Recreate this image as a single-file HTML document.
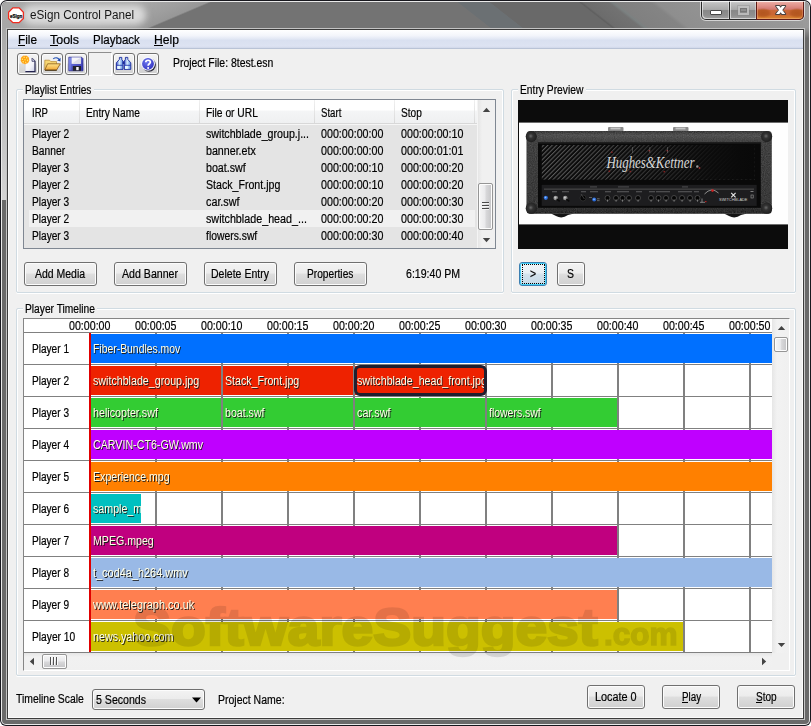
<!DOCTYPE html>
<html><head><meta charset="utf-8"><title>eSign Control Panel</title>
<style>
*{box-sizing:border-box;margin:0;padding:0}
html,body{width:811px;height:726px;overflow:hidden;background:#fff;font-family:"Liberation Sans",sans-serif;font-size:12px;color:#000}
.a{position:absolute}
.t{position:absolute;white-space:nowrap;transform-origin:0 0;-webkit-text-stroke:0.2px currentColor}
.gb{position:absolute;border:1px solid #d0dbe2;border-radius:2px;box-shadow:inset 1px 1px 0 #fff,inset -1px 0 0 #fff,0 1px 0 #fff}
.gbl{position:absolute;background:#f0f0f0;height:13px}
.btn{position:absolute;border:1px solid #707070;border-radius:3px;background:linear-gradient(#f3f3f3 0,#ececec 46%,#dedede 50%,#d0d0d0 100%);box-shadow:inset 0 0 0 1px #fcfcfc}
.bar{position:absolute;height:29px;overflow:hidden}
.bt{position:absolute;white-space:nowrap;transform-origin:0 0;color:#ffffe8;text-shadow:1px 1px 0 #1c1c1c}
.hl{position:absolute;height:1px;background:#808080}
.vl{position:absolute;width:2px;background:#808080}
.thumb{position:absolute;border:1px solid #959595;border-radius:2px;box-shadow:inset 0 0 0 1px #fdfdfd}
</style></head><body>

<div class="a" style="left:0;top:0;width:811px;height:726px;border-radius:7px 7px 6px 6px;background:#18181e"></div>
<div class="a" style="left:1px;top:1px;width:809px;height:724px;border-radius:6px 6px 5px 5px;background:#eaeaea"></div>
<div class="a" id="glass" style="left:2px;top:2px;width:807px;height:722px;border-radius:5px 5px 4px 4px;background:#6a6a6a;overflow:hidden"><div class="a" style="left:0;top:0;width:807px;height:27px;background:#737373"></div><div class="a" style="left:-2px;top:0;width:440px;height:27px;transform:skewX(-67deg);transform-origin:0 0;background:linear-gradient(90deg,#a8a8a8 0,#a6a6a6 150px,#9e9e9e 185px,#979797 208px,#737373 212px,#737373 440px)"></div><div class="a" style="left:398px;top:0;width:500px;height:27px;transform:skewX(52deg);transform-origin:0 0;background:linear-gradient(90deg,#737373 0,#737373 57px,#6b7073 58px,#6b7073 89px,#696969 90px,#696969 178px,#5f5f5f 180px,#6c6c6c 183px,#727272 208px,#7b8181 212px,#808080 216px,#848484 250px,#8e8e8e 256px,#939393 300px,#9b9b9b 400px)"></div><div class="a" style="left:0;top:27px;width:6px;height:171px;background:linear-gradient(#a8a8a8,#bcbcbc 40%,#d4d4d4)"></div><div class="a" style="left:801px;top:0;width:6px;height:36px;background:linear-gradient(#9c9c9c,#9a9a9a 70%,#6c6c6c)"></div></div>
<div class="a" style="left:6px;top:28px;width:799px;height:692px;background:#c4c4c4"></div>
<div class="a" style="left:7px;top:29px;width:797px;height:690px;background:#3c3c3c"></div>
<div class="a" style="left:8px;top:30px;width:795px;height:688px;background:#f0f0f0;border-left:1px solid #fafafa;border-right:1px solid #fcfcfc;border-bottom:1px solid #fbfbfb"></div>
<div class="a" style="left:22px;top:5px;width:124px;height:20px;border-radius:10px;background:#dadada;filter:blur(3.5px)"></div>
<div class="t" style="left:29.80px;top:8px;font-size:12.5px;line-height:14px;color:#161616;transform:scaleX(0.9359);-webkit-text-stroke:0;">eSign Control Panel</div>
<svg class="a" style="left:7px;top:6px" width="18" height="19" viewBox="0 0 18 19"><polygon points="5.9,1.9 12.1,1.9 16.4,6.2 16.4,12.4 12.1,16.7 5.9,16.7 1.6,12.4 1.6,6.2" fill="#fff" stroke="#ee2c20" stroke-width="1.3"/><text x="2.9" y="11.6" font-family="Liberation Sans" font-weight="bold" font-size="6.2" textLength="12.4" lengthAdjust="spacingAndGlyphs" fill="#000" stroke="#000" stroke-width=".25">eSign</text></svg>
<div class="a" style="left:700px;top:1px;width:105px;height:20px;border-radius:0 0 6px 6px;background:rgba(255,255,255,.6)"></div>
<div class="a" style="left:701px;top:1px;width:103px;height:19px;border-radius:0 0 5px 5px;background:#2a2a2a"></div>
<div class="a" style="left:702px;top:1px;width:27px;height:18px;border-radius:0 0 0 4px;background:linear-gradient(#d2d2d2 0,#bdbdbd 15%,#a9a9a9 47%,#878787 53%,#8f8f8f 80%,#a2a2a2 100%);box-shadow:inset 1px -1px 0 rgba(255,255,255,.55),inset -1px 0 0 rgba(255,255,255,.35)"></div>
<div class="a" style="left:730px;top:1px;width:26px;height:18px;background:linear-gradient(#d2d2d2 0,#bdbdbd 15%,#a9a9a9 47%,#878787 53%,#8f8f8f 80%,#a2a2a2 100%);box-shadow:inset 1px -1px 0 rgba(255,255,255,.55),inset -1px 0 0 rgba(255,255,255,.35)"></div>
<div class="a" style="left:756px;top:1px;width:48px;height:19px;border-radius:0 0 5px 0;background:#5e1a16"></div>
<div class="a" style="left:757px;top:1px;width:46px;height:18px;border-radius:0 0 4px 0;background:radial-gradient(ellipse 9px 5px at 6px 12px,rgba(176,84,28,.9) 0,rgba(176,84,28,.7) 60%,rgba(176,84,28,0) 100%),radial-gradient(ellipse 9px 5px at 40px 12px,rgba(176,84,28,.9) 0,rgba(176,84,28,.7) 60%,rgba(176,84,28,0) 100%),linear-gradient(#f6c8c0 0,#e9a49c 10%,#e09088 28%,#d37870 46%,#cb6838 52%,#ca6634 75%,#d47a2c 90%,#d88a3a 100%);box-shadow:inset 1px -1px 0 rgba(255,190,150,.4),inset -1px 0 0 rgba(255,190,150,.3)"></div>
<div class="a" style="left:701px;top:1px;width:103px;height:1px;background:rgba(255,255,255,.75)"></div>
<div class="a" style="left:710px;top:10px;width:12px;height:5px;background:#fff;border:1px solid #474747;border-radius:1px"></div>
<div class="a" style="left:738px;top:6px;width:11px;height:9px;border:2px solid #c2c2c2;background:#8a8a8a;box-shadow:0 0 0 1px rgba(130,130,130,.35);opacity:.85"></div>
<div class="a" style="left:740px;top:8px;width:7px;height:4px;border:1px solid #777;background:#8f8f8f"></div>
<svg class="a" style="left:770px;top:1px" width="22" height="18" viewBox="770 1 22 18"><path id="xg" d="M776 5.9 H779.3 L785.3 14.1 H782 Z M782 5.9 H785.3 L779.3 14.1 H776 Z" fill="#4a4240" stroke="#4a4240" stroke-width="1.8" stroke-linejoin="round"/><path d="M776 5.9 H779.3 L785.3 14.1 H782 Z M782 5.9 H785.3 L779.3 14.1 H776 Z" fill="#fff"/></svg>

<div class="a" style="left:8px;top:30px;width:795px;height:19px;background:linear-gradient(#ffffff 0,#f3f5fb 30%,#e4e9f5 45%,#d9e0f0 55%,#dde3f2 85%,#c9d1e3 100%)"></div>
<div class="a" style="left:8px;top:48px;width:795px;height:1px;background:#b9c3d6"></div>
<div class="t" style="left:18.00px;top:33px;font-size:12.5px;line-height:14px;color:#000;transform:scaleX(0.9441);">File</div><div class="a" style="left:18.0px;top:45px;width:7.2px;height:1px;background:#000"></div>
<div class="t" style="left:50.00px;top:33px;font-size:12.5px;line-height:14px;color:#000;transform:scaleX(0.9957);">Tools</div><div class="a" style="left:50.0px;top:45px;width:7.6px;height:1px;background:#000"></div>
<div class="t" style="left:93.00px;top:33px;font-size:12.5px;line-height:14px;color:#000;transform:scaleX(0.9238);">Playback</div>
<div class="t" style="left:154.00px;top:33px;font-size:12.5px;line-height:14px;color:#000;transform:scaleX(0.9709);">Help</div><div class="a" style="left:154.0px;top:45px;width:8.8px;height:1px;background:#000"></div>
<div class="btn" style="left:17px;top:53px;width:22px;height:22px"></div>
<div class="btn" style="left:41px;top:53px;width:22px;height:22px"></div>
<div class="btn" style="left:65px;top:53px;width:22px;height:22px"></div>
<div class="btn" style="left:113px;top:53px;width:22px;height:22px"></div>
<div class="btn" style="left:137px;top:53px;width:22px;height:22px"></div>
<div class="a" style="left:88px;top:52px;width:24px;height:24px;background:#f0f0f0;border-right:1px solid #fff;border-bottom:1px solid #fff;border-left:1px solid #8e8e8e;border-top:1px solid #8e8e8e"></div>
<div class="t" style="left:173.20px;top:56px;font-size:12px;line-height:14px;color:#000;transform:scaleX(0.8689);">Project File: 8test.esn</div>
<svg class="a" style="left:14px;top:50px" width="150" height="28" viewBox="14 50 150 28">
<defs>
<linearGradient id="pg" x1="0" y1="0" x2="1" y2="1"><stop offset="0" stop-color="#ffffff"/><stop offset="0.6" stop-color="#f4f4fa"/><stop offset="1" stop-color="#c9cde6"/></linearGradient>
<linearGradient id="fo" x1="0" y1="0" x2="0" y2="1"><stop offset="0" stop-color="#ffe48a"/><stop offset="1" stop-color="#f0a838"/></linearGradient>
<linearGradient id="fl" x1="0" y1="0" x2="1" y2="1"><stop offset="0" stop-color="#7a86e8"/><stop offset="1" stop-color="#3030a8"/></linearGradient>
<radialGradient id="hp" cx="0.4" cy="0.35" r="0.7"><stop offset="0" stop-color="#6c78f0"/><stop offset="1" stop-color="#3434c0"/></radialGradient>
<linearGradient id="bn" x1="0" y1="0" x2="1" y2="0"><stop offset="0" stop-color="#3a50c8"/><stop offset="0.45" stop-color="#d8f0ff"/><stop offset="1" stop-color="#5a8ae0"/></linearGradient>
</defs>
<!-- new -->
<path d="M25.2 58.3 H32 L35 61.3 V71.6 H25.2 Z" fill="url(#pg)"/>
<path d="M32 58.3 L35 61.3 V71.6 H25.2" fill="none" stroke="#23234e" stroke-width="1.2"/>
<path d="M32 58.3 V61.3 H35" fill="#d8d8e8" stroke="#3a3a66" stroke-width="0.8"/>
<path d="M25.2 58.3 V71.6" stroke="#c8c8d8" stroke-width="0.6"/>
<circle cx="25" cy="59.8" r="4.1" fill="#ff9a10"/>
<circle cx="25" cy="59.8" r="2.6" fill="none" stroke="#ffe868" stroke-width="1.3" stroke-dasharray="1.4 1.2"/>
<circle cx="25" cy="59.8" r="1" fill="#ffd23a"/>
<circle cx="25" cy="59.8" r="4.1" fill="none" stroke="#ffc040" stroke-width="0.8" stroke-dasharray="1.2 1.6"/>
<!-- open -->
<path d="M44.8 60.2 H49.5 L50.8 61.6 H56.5 V69.8 H44.8 Z" fill="#f7d774" stroke="#b8862a" stroke-width="0.7"/>
<path d="M47.6 63.8 H60.3 L56.6 70 H44.8 Z" fill="url(#fo)" stroke="#8a5a18" stroke-width="0.8"/>
<path d="M45 70.3 H56.8" stroke="#3a2a10" stroke-width="0.9"/>
<path d="M53.2 58.9 C55.5 57 58.3 57.6 59.4 59.8" fill="none" stroke="#2c58b8" stroke-width="1.2"/>
<path d="M60.6 57.8 L60.4 61.6 L57.2 60.4 Z" fill="#1c48b0"/>
<!-- save -->
<path d="M68.8 57.2 H81.6 L83 58.6 V70.8 H68.8 Z" fill="url(#fl)" stroke="#28288a" stroke-width="0.7"/>
<rect x="71.6" y="57.4" width="9.2" height="6.4" fill="#f4f4f8"/>
<path d="M71.6 63.8 L80.8 57.4 V63.8 Z" fill="#dcdce6"/>
<rect x="72.8" y="66" width="8.2" height="4.8" fill="#22222a"/>
<rect x="76.2" y="67" width="2.5" height="3.2" fill="#f4f4f4"/>
<rect x="69.3" y="57.8" width="1.2" height="12.4" fill="#8c98f0" opacity=".8"/>
<!-- binoculars -->
<g stroke="#1e2c9c" stroke-width="0.9">
<path d="M119.4 57.4 H121.8 V59.4 L123 61.2 V69.4 H116.4 V62.8 L119.4 59.4 Z" fill="url(#bn)"/>
<path d="M125.4 57.4 H127.8 V59.4 L130.8 62.8 V69.4 H124.2 V61.2 L125.4 59.4 Z" fill="url(#bn)"/>
</g>
<rect x="122.6" y="61.4" width="2" height="2.6" fill="#1e2c9c"/>
<path d="M116.6 65.3 H122.8 M124.4 65.3 H130.6" stroke="#2438b0" stroke-width="0.9"/>
<rect x="117.2" y="65.9" width="2.6" height="3" fill="#e8f8ff"/><rect x="125" y="65.9" width="2.6" height="3" fill="#e8f8ff"/>
<!-- help -->
<circle cx="149" cy="64.8" r="6.9" fill="#1a1a2a" opacity=".9"/>
<circle cx="148" cy="63.8" r="7" fill="#f4f6ff"/>
<circle cx="148" cy="63.8" r="5.9" fill="url(#hp)"/>
<path d="M145.8 62.2 C145.8 59.6 150.4 59.6 150.4 62.1 C150.4 63.8 148.1 63.8 148.1 65.8" fill="none" stroke="#fff" stroke-width="1.7"/>
<circle cx="148.1" cy="67.9" r="1" fill="#fff"/>
</svg>

<div class="gb" style="left:16px;top:89px;width:488px;height:204px"></div>
<div class="gbl" style="left:23.0px;top:83px;width:70.8px"></div>
<div class="t" style="left:25.40px;top:83px;font-size:12px;line-height:14px;color:#000;transform:scaleX(0.8435);">Playlist Entries</div>
<div class="gb" style="left:511px;top:89px;width:285px;height:204px"></div>
<div class="gbl" style="left:518.0px;top:83px;width:67.9px"></div>
<div class="t" style="left:520.40px;top:83px;font-size:12px;line-height:14px;color:#000;transform:scaleX(0.8563);">Entry Preview</div>
<div class="gb" style="left:16px;top:308px;width:780px;height:368px"></div>
<div class="gbl" style="left:22.8px;top:302px;width:74.4px"></div>
<div class="t" style="left:25.20px;top:302px;font-size:12px;line-height:14px;color:#000;transform:scaleX(0.8528);">Player Timeline</div>
<div class="a" style="left:23px;top:99px;width:473px;height:150px;background:#e4e4e4;border:1px solid #7f8792"></div>
<div class="a" style="left:24px;top:100px;width:471px;height:24px;background:linear-gradient(#ffffff 0,#ffffff 42%,#f4f5f6 50%,#eff0f1 100%);border-bottom:1px solid #d8d8d8"></div>
<div class="a" style="left:24px;top:124px;width:471px;height:1px;background:#f6f6f6"></div>
<div class="a" style="left:79px;top:100px;width:1px;height:23px;background:linear-gradient(#f0f0f0,#dadada)"></div>
<div class="a" style="left:199px;top:100px;width:1px;height:23px;background:linear-gradient(#f0f0f0,#dadada)"></div>
<div class="a" style="left:314px;top:100px;width:1px;height:23px;background:linear-gradient(#f0f0f0,#dadada)"></div>
<div class="a" style="left:394px;top:100px;width:1px;height:23px;background:linear-gradient(#f0f0f0,#dadada)"></div>
<div class="a" style="left:474px;top:100px;width:1px;height:23px;background:linear-gradient(#f0f0f0,#dadada)"></div>
<div class="t" style="left:31.60px;top:106px;font-size:12px;line-height:14px;color:#000;transform:scaleX(0.7984);">IRP</div>
<div class="t" style="left:86.20px;top:106px;font-size:12px;line-height:14px;color:#000;transform:scaleX(0.8491);">Entry Name</div>
<div class="t" style="left:205.90px;top:106px;font-size:12px;line-height:14px;color:#000;transform:scaleX(0.8547);">File or URL</div>
<div class="t" style="left:321.30px;top:106px;font-size:12px;line-height:14px;color:#000;transform:scaleX(0.8017);">Start</div>
<div class="t" style="left:401.20px;top:106px;font-size:12px;line-height:14px;color:#000;transform:scaleX(0.8414);">Stop</div>
<div class="a" style="left:29px;top:210px;width:446px;height:17px;background:#f1f1f1"></div>
<div class="a" style="left:477px;top:100px;width:1px;height:148px;background:#f4f4f4"></div>
<div class="a" style="left:478px;top:100px;width:17px;height:148px;background:linear-gradient(90deg,#e6e6e6,#f0f0f0 25%,#f0f0f0)"></div>
<div class="thumb" style="left:478px;top:183px;width:15px;height:47px;background:linear-gradient(90deg,#f6f6f6 0,#eaeaec 45%,#d8d8da 55%,#c4c4c6 100%)"></div>
<div class="a" style="left:482px;top:202px;width:7px;height:1px;background:#4a4a4a"></div><div class="a" style="left:482px;top:203px;width:7px;height:1px;background:#f4f4f4"></div>
<div class="a" style="left:482px;top:205px;width:7px;height:1px;background:#4a4a4a"></div><div class="a" style="left:482px;top:206px;width:7px;height:1px;background:#f4f4f4"></div>
<div class="a" style="left:482px;top:208px;width:7px;height:1px;background:#4a4a4a"></div><div class="a" style="left:482px;top:209px;width:7px;height:1px;background:#f4f4f4"></div>
<svg class="a" style="left:482px;top:107px" width="9" height="6"><path d="M0.8 5 L4.5 0.7 L8.2 5 Z" fill="#444"/></svg>
<svg class="a" style="left:482px;top:237px" width="9" height="6"><path d="M0.8 1 L4.5 5.3 L8.2 1 Z" fill="#444"/></svg>
<div class="t" style="left:31.60px;top:127px;font-size:12px;line-height:14px;color:#000;transform:scaleX(0.8447);">Player 2</div>
<div class="t" style="left:205.50px;top:127px;font-size:12px;line-height:14px;color:#000;transform:scaleX(0.8876);">switchblade_group.j...</div>
<div class="t" style="left:321.20px;top:127px;font-size:12px;line-height:14px;color:#000;transform:scaleX(0.8904);">000:00:00:00</div>
<div class="t" style="left:401.20px;top:127px;font-size:12px;line-height:14px;color:#000;transform:scaleX(0.8904);">000:00:00:10</div>
<div class="t" style="left:31.60px;top:144px;font-size:12px;line-height:14px;color:#000;transform:scaleX(0.8540);">Banner</div>
<div class="t" style="left:205.50px;top:144px;font-size:12px;line-height:14px;color:#000;transform:scaleX(0.8887);">banner.etx</div>
<div class="t" style="left:321.20px;top:144px;font-size:12px;line-height:14px;color:#000;transform:scaleX(0.8904);">000:00:00:00</div>
<div class="t" style="left:401.20px;top:144px;font-size:12px;line-height:14px;color:#000;transform:scaleX(0.8904);">000:00:01:01</div>
<div class="t" style="left:31.60px;top:161px;font-size:12px;line-height:14px;color:#000;transform:scaleX(0.8447);">Player 3</div>
<div class="t" style="left:205.50px;top:161px;font-size:12px;line-height:14px;color:#000;transform:scaleX(0.8892);">boat.swf</div>
<div class="t" style="left:321.20px;top:161px;font-size:12px;line-height:14px;color:#000;transform:scaleX(0.8904);">000:00:00:10</div>
<div class="t" style="left:401.20px;top:161px;font-size:12px;line-height:14px;color:#000;transform:scaleX(0.8904);">000:00:00:20</div>
<div class="t" style="left:31.60px;top:178px;font-size:12px;line-height:14px;color:#000;transform:scaleX(0.8447);">Player 2</div>
<div class="t" style="left:205.50px;top:178px;font-size:12px;line-height:14px;color:#000;transform:scaleX(0.8845);">Stack_Front.jpg</div>
<div class="t" style="left:321.20px;top:178px;font-size:12px;line-height:14px;color:#000;transform:scaleX(0.8904);">000:00:00:10</div>
<div class="t" style="left:401.20px;top:178px;font-size:12px;line-height:14px;color:#000;transform:scaleX(0.8904);">000:00:00:20</div>
<div class="t" style="left:31.60px;top:195px;font-size:12px;line-height:14px;color:#000;transform:scaleX(0.8447);">Player 3</div>
<div class="t" style="left:205.50px;top:195px;font-size:12px;line-height:14px;color:#000;transform:scaleX(0.8976);">car.swf</div>
<div class="t" style="left:321.20px;top:195px;font-size:12px;line-height:14px;color:#000;transform:scaleX(0.8904);">000:00:00:20</div>
<div class="t" style="left:401.20px;top:195px;font-size:12px;line-height:14px;color:#000;transform:scaleX(0.8904);">000:00:00:30</div>
<div class="t" style="left:31.60px;top:212px;font-size:12px;line-height:14px;color:#000;transform:scaleX(0.8447);">Player 2</div>
<div class="t" style="left:205.50px;top:212px;font-size:12px;line-height:14px;color:#000;transform:scaleX(0.8955);">switchblade_head_...</div>
<div class="t" style="left:321.20px;top:212px;font-size:12px;line-height:14px;color:#000;transform:scaleX(0.8904);">000:00:00:20</div>
<div class="t" style="left:401.20px;top:212px;font-size:12px;line-height:14px;color:#000;transform:scaleX(0.8904);">000:00:00:30</div>
<div class="t" style="left:31.60px;top:229px;font-size:12px;line-height:14px;color:#000;transform:scaleX(0.8447);">Player 3</div>
<div class="t" style="left:205.50px;top:229px;font-size:12px;line-height:14px;color:#000;transform:scaleX(0.8636);">flowers.swf</div>
<div class="t" style="left:321.20px;top:229px;font-size:12px;line-height:14px;color:#000;transform:scaleX(0.8904);">000:00:00:30</div>
<div class="t" style="left:401.20px;top:229px;font-size:12px;line-height:14px;color:#000;transform:scaleX(0.8904);">000:00:00:40</div>
<div class="btn" style="left:24px;top:262px;width:73px;height:24px"></div>
<div class="t" style="left:35.00px;top:267px;font-size:12px;line-height:14px;color:#000;transform:scaleX(0.8734);">Add Media</div>
<div class="btn" style="left:114px;top:262px;width:73px;height:24px"></div>
<div class="t" style="left:122.20px;top:267px;font-size:12px;line-height:14px;color:#000;transform:scaleX(0.8838);">Add Banner</div>
<div class="btn" style="left:204px;top:262px;width:73px;height:24px"></div>
<div class="t" style="left:211.00px;top:267px;font-size:12px;line-height:14px;color:#000;transform:scaleX(0.8788);">Delete Entry</div>
<div class="btn" style="left:294px;top:262px;width:73px;height:24px"></div>
<div class="t" style="left:307.20px;top:267px;font-size:12px;line-height:14px;color:#000;transform:scaleX(0.8480);">Properties</div>
<div class="t" style="left:406.00px;top:267px;font-size:12px;line-height:14px;color:#000;transform:scaleX(0.8806);">6:19:40 PM</div>
<svg class="a" style="left:518px;top:100px" width="270" height="149" viewBox="518 100 270 149">
<defs>
<pattern id="hatch" width="3.1" height="3.1" patternUnits="userSpaceOnUse" patternTransform="rotate(-45 542 145)"><rect width="3.1" height="3.1" fill="#0b0b0b"/><rect y="0" width="3.1" height="1.05" fill="#5e5e5e"/></pattern>
<linearGradient id="hfade" x1="0" x2="1"><stop offset="0" stop-color="#0b0b0b" stop-opacity="0"/><stop offset="0.3" stop-color="#0b0b0b" stop-opacity="0.25"/><stop offset="0.6" stop-color="#0b0b0b" stop-opacity="0.6"/><stop offset="0.8" stop-color="#0b0b0b" stop-opacity="0.9"/><stop offset="0.93" stop-color="#0a0a0a" stop-opacity="1"/><stop offset="1" stop-color="#090909" stop-opacity="1"/></linearGradient>
<linearGradient id="shell" x1="0" y1="0" x2="0" y2="1"><stop offset="0" stop-color="#2a2a2a"/><stop offset="0.05" stop-color="#464646"/><stop offset="0.13" stop-color="#343434"/><stop offset="0.9" stop-color="#2a2a2a"/><stop offset="1" stop-color="#161616"/></linearGradient>
<radialGradient id="ball" cx="0.45" cy="0.45" r="0.6"><stop offset="0" stop-color="#6a6a6a"/><stop offset="0.35" stop-color="#333"/><stop offset="1" stop-color="#1c1c1c"/></radialGradient>
<filter id="nz" x="0" y="0" width="1" height="1"><feTurbulence type="fractalNoise" baseFrequency="0.9" numOctaves="2" seed="3"/><feColorMatrix type="matrix" values="0 0 0 0 0.5  0 0 0 0 0.5  0 0 0 0 0.5  0.5 0.5 0 0 -0.28"/><feComposite in2="SourceGraphic" operator="in"/></filter>
</defs>
<rect x="518" y="100" width="270" height="149" fill="#0c0c0c"/>
<rect x="519" y="122.6" width="269" height="101.8" fill="#fefefe"/>
<rect x="608" y="127" width="15.5" height="4.5" rx="1" fill="#8a8a8a"/><rect x="610.5" y="127.6" width="10" height="1.8" fill="#c4c4c4"/>
<rect x="673" y="127" width="15.5" height="4.5" rx="1" fill="#8a8a8a"/><rect x="675.5" y="127.6" width="10" height="1.8" fill="#c4c4c4"/>
<path d="M551 213.5 H574 L568 215 Q562 219.4 556 216 Z" fill="#141414"/>
<path d="M724 213.5 H747 L741 215 Q735 219.4 729 216 Z" fill="#141414"/>
<rect x="526.5" y="131" width="245.3" height="82.8" rx="3.5" fill="url(#shell)"/>
<rect x="526.5" y="131" width="245.3" height="82.8" rx="3.5" fill="#888" filter="url(#nz)" opacity=".45"/>
<circle cx="531.3" cy="136.6" r="5.6" fill="url(#ball)"/>
<circle cx="766.6" cy="136.6" r="5.6" fill="url(#ball)"/>
<circle cx="531.3" cy="208.2" r="5.6" fill="url(#ball)"/>
<circle cx="766.6" cy="208.2" r="5.6" fill="url(#ball)"/>
<rect x="538" y="142.4" width="222.8" height="65.4" fill="#090909"/>
<rect x="538" y="142.4" width="222.8" height="1.2" fill="#1e1e1e"/>
<rect x="541.8" y="145" width="213" height="34.6" fill="url(#hatch)"/>
<rect x="541.8" y="145" width="213" height="34.6" fill="url(#hfade)"/>
<text x="606.5" y="168.3" font-family="Liberation Serif" font-style="italic" font-size="17" textLength="88" lengthAdjust="spacingAndGlyphs" fill="#d6d6d6">Hughes&amp;Kettner</text>
<rect x="608.5" y="170.5" width="1.6" height="1.4" fill="#a02020" opacity=".8"/>
<rect x="629.5" y="170.8" width="1.6" height="1.4" fill="#a02020" opacity=".8"/>
<rect x="663.5" y="171" width="1.6" height="1.4" fill="#a02020" opacity=".8"/>
<rect x="611" y="151.5" width="1.6" height="1.4" fill="#a02020" opacity=".8"/>
<rect x="648.5" y="150" width="1.6" height="1.4" fill="#a02020" opacity=".8"/>
<rect x="666.5" y="150" width="1.6" height="1.4" fill="#a02020" opacity=".8"/>
<rect x="632" y="147" width="0.7" height="6" fill="#888" opacity=".6"/>
<rect x="649.5" y="147" width="0.7" height="6" fill="#888" opacity=".6"/>
<rect x="667" y="147" width="0.7" height="6" fill="#888" opacity=".6"/>
<circle cx="697.3" cy="166.5" r="1.2" fill="#999"/><circle cx="699.5" cy="168" r="0.9" fill="#a03030"/>
<rect x="541.7" y="184.9" width="215" height="21" fill="#1d1d1f"/>
<rect x="544" y="188.7" width="210" height="0.8" fill="#5c5c5c"/>
<circle cx="545.8" cy="197.8" r="2.1" fill="#2a6ad8"/><circle cx="545.5" cy="197.4" r="0.9" fill="#8ec0ff"/>
<circle cx="555.7" cy="198" r="2.3" fill="#8a8a8a"/><circle cx="555.3000000000001" cy="197.6" r="1.1" fill="#c8c8c8"/><path d="M556.7 199 l3 2.4" stroke="#0a0a0a" stroke-width="1.6"/>
<circle cx="565.3" cy="198" r="2.3" fill="#8a8a8a"/><circle cx="564.9" cy="197.6" r="1.1" fill="#c8c8c8"/><path d="M566.3 199 l3 2.4" stroke="#0a0a0a" stroke-width="1.6"/>
<circle cx="583" cy="198" r="3" fill="#060606" stroke="#3a3a3a" stroke-width=".6"/><path d="M581 194 l3.4 5" stroke="#555" stroke-width=".7"/>
<circle cx="594.2" cy="199.6" r="2" fill="#2a6ad8"/><circle cx="594" cy="199.2" r="0.8" fill="#9ccaff"/>
<rect x="589" y="197.3" width="3" height="0.7" fill="#777"/><rect x="597" y="198.5" width="2.6" height="0.7" fill="#888"/><rect x="597" y="200.4" width="2.6" height="0.7" fill="#888"/>
<circle cx="607.5" cy="198" r="2.5" fill="#050505" stroke="#5a5a5a" stroke-width=".7"/><rect x="607.2" y="199.5" width="0.7" height="2.2" fill="#999"/>
<circle cx="616" cy="198" r="2.5" fill="#050505" stroke="#5a5a5a" stroke-width=".7"/><rect x="615.7" y="199.5" width="0.7" height="2.2" fill="#999"/>
<circle cx="622.5" cy="198" r="2.5" fill="#050505" stroke="#5a5a5a" stroke-width=".7"/><rect x="622.2" y="199.5" width="0.7" height="2.2" fill="#999"/>
<circle cx="629" cy="198" r="2.5" fill="#050505" stroke="#5a5a5a" stroke-width=".7"/><rect x="628.7" y="199.5" width="0.7" height="2.2" fill="#999"/>
<circle cx="638" cy="198" r="2.5" fill="#050505" stroke="#5a5a5a" stroke-width=".7"/><rect x="637.7" y="199.5" width="0.7" height="2.2" fill="#999"/>
<circle cx="651" cy="198" r="2.5" fill="#050505" stroke="#5a5a5a" stroke-width=".7"/><rect x="650.7" y="199.5" width="0.7" height="2.2" fill="#999"/>
<circle cx="658.5" cy="198" r="2.5" fill="#050505" stroke="#5a5a5a" stroke-width=".7"/><rect x="658.2" y="199.5" width="0.7" height="2.2" fill="#999"/>
<circle cx="666" cy="198" r="2.5" fill="#050505" stroke="#5a5a5a" stroke-width=".7"/><rect x="665.7" y="199.5" width="0.7" height="2.2" fill="#999"/>
<circle cx="674" cy="198" r="2.5" fill="#050505" stroke="#5a5a5a" stroke-width=".7"/><rect x="673.7" y="199.5" width="0.7" height="2.2" fill="#999"/>
<circle cx="682" cy="198" r="2.5" fill="#050505" stroke="#5a5a5a" stroke-width=".7"/><rect x="681.7" y="199.5" width="0.7" height="2.2" fill="#999"/>
<circle cx="690" cy="198" r="2.5" fill="#050505" stroke="#5a5a5a" stroke-width=".7"/><rect x="689.7" y="199.5" width="0.7" height="2.2" fill="#999"/>
<circle cx="697.5" cy="198" r="2.5" fill="#050505" stroke="#5a5a5a" stroke-width=".7"/><rect x="697.2" y="199.5" width="0.7" height="2.2" fill="#999"/>
<rect x="552" y="191.4" width="5" height="0.8" fill="#8a8a8a" opacity=".75"/>
<rect x="562" y="191.4" width="7" height="0.8" fill="#8a8a8a" opacity=".75"/>
<rect x="581" y="191.4" width="5" height="0.8" fill="#8a8a8a" opacity=".75"/>
<rect x="590" y="191.4" width="8" height="0.8" fill="#8a8a8a" opacity=".75"/>
<rect x="605" y="191.4" width="6" height="0.8" fill="#8a8a8a" opacity=".75"/>
<rect x="617" y="191.4" width="12" height="0.8" fill="#8a8a8a" opacity=".75"/>
<rect x="636" y="191.4" width="6" height="0.8" fill="#8a8a8a" opacity=".75"/>
<rect x="649" y="191.4" width="6" height="0.8" fill="#8a8a8a" opacity=".75"/>
<rect x="656" y="191.4" width="14" height="0.8" fill="#8a8a8a" opacity=".75"/>
<rect x="678" y="191.4" width="14" height="0.8" fill="#8a8a8a" opacity=".75"/>
<rect x="694" y="191.4" width="5" height="0.8" fill="#8a8a8a" opacity=".75"/>
<rect x="590" y="186.6" width="7" height="0.7" fill="#888" opacity=".7"/><rect x="618" y="186.6" width="11" height="0.7" fill="#888" opacity=".7"/><rect x="682" y="186.6" width="6" height="0.7" fill="#888" opacity=".7"/>
<path d="M704.5 194 Q711.5 186.5 718.5 193" fill="none" stroke="#9a9a9a" stroke-width=".9"/><circle cx="712.5" cy="190.6" r="1.3" fill="#d02020"/><path d="M700 202.3 h5 M702 198.5 v3.8" stroke="#aaa" stroke-width=".7"/><rect x="705" y="201" width="1.5" height="1.2" fill="#b02020"/>
<path d="M731.2 192.8 l4.4 4.6 M735.6 192.8 l-4.4 4.6" stroke="#e8e8e8" stroke-width="1.1"/>
<text x="719" y="201.2" font-family="Liberation Sans" font-size="3.6" textLength="28.5" lengthAdjust="spacingAndGlyphs" fill="#cfcfcf">SWITCHBLADE</text>
<rect x="750.5" y="191.2" width="3" height="0.8" fill="#999"/><rect x="751" y="195" width="2.2" height="3" fill="none" stroke="#999" stroke-width=".6"/>
</svg>
<div class="btn" style="left:519px;top:262px;width:28px;height:24px;border-color:#3c7fb1;box-shadow:inset 0 0 0 1px #46d2f8;background:linear-gradient(#f1f5f8 0,#e7eff4 46%,#d4e3ed 50%,#c5d9e7 100%)"></div>
<div class="a" style="left:522px;top:264px;width:23px;height:20px;border:1px dotted #000"></div>
<div class="t" style="left:530.30px;top:267px;font-size:12px;line-height:14px;color:#000;transform:scaleX(0.8700);">></div>
<div class="btn" style="left:557px;top:262px;width:28px;height:24px"></div>
<div class="t" style="left:567.40px;top:267px;font-size:12px;line-height:14px;color:#000;transform:scaleX(0.8700);">S</div>
<div class="a" style="left:23px;top:318px;width:767px;height:353px;background:#fff;border:1px solid #868686;border-right-color:#fff;border-bottom-color:#fff"></div>
<div class="hl" style="left:24px;top:332px;width:748px"></div>
<div class="hl" style="left:24px;top:364px;width:748px"></div>
<div class="hl" style="left:24px;top:396px;width:748px"></div>
<div class="hl" style="left:24px;top:428px;width:748px"></div>
<div class="hl" style="left:24px;top:460px;width:748px"></div>
<div class="hl" style="left:24px;top:492px;width:748px"></div>
<div class="hl" style="left:24px;top:524px;width:748px"></div>
<div class="hl" style="left:24px;top:556px;width:748px"></div>
<div class="hl" style="left:24px;top:588px;width:748px"></div>
<div class="hl" style="left:24px;top:620px;width:748px"></div>
<div class="hl" style="left:24px;top:652px;width:748px"></div>
<div class="vl" style="left:155px;top:332px;height:320px"></div>
<div class="vl" style="left:221px;top:332px;height:320px"></div>
<div class="vl" style="left:287px;top:332px;height:320px"></div>
<div class="vl" style="left:353px;top:332px;height:320px"></div>
<div class="vl" style="left:419px;top:332px;height:320px"></div>
<div class="vl" style="left:485px;top:332px;height:320px"></div>
<div class="vl" style="left:551px;top:332px;height:320px"></div>
<div class="vl" style="left:617px;top:332px;height:320px"></div>
<div class="vl" style="left:683px;top:332px;height:320px"></div>
<div class="vl" style="left:749px;top:332px;height:320px"></div>
<div class="a" style="left:89px;top:333px;width:2px;height:319px;background:#e00000"></div>
<div class="t" style="left:69.30px;top:319px;font-size:12px;line-height:14px;color:#000;transform:scaleX(0.8869);">00:00:00</div>
<div class="t" style="left:135.30px;top:319px;font-size:12px;line-height:14px;color:#000;transform:scaleX(0.8869);">00:00:05</div>
<div class="t" style="left:201.30px;top:319px;font-size:12px;line-height:14px;color:#000;transform:scaleX(0.8869);">00:00:10</div>
<div class="t" style="left:267.30px;top:319px;font-size:12px;line-height:14px;color:#000;transform:scaleX(0.8869);">00:00:15</div>
<div class="t" style="left:333.30px;top:319px;font-size:12px;line-height:14px;color:#000;transform:scaleX(0.8869);">00:00:20</div>
<div class="t" style="left:399.30px;top:319px;font-size:12px;line-height:14px;color:#000;transform:scaleX(0.8869);">00:00:25</div>
<div class="t" style="left:465.30px;top:319px;font-size:12px;line-height:14px;color:#000;transform:scaleX(0.8869);">00:00:30</div>
<div class="t" style="left:531.30px;top:319px;font-size:12px;line-height:14px;color:#000;transform:scaleX(0.8869);">00:00:35</div>
<div class="t" style="left:597.30px;top:319px;font-size:12px;line-height:14px;color:#000;transform:scaleX(0.8869);">00:00:40</div>
<div class="t" style="left:663.30px;top:319px;font-size:12px;line-height:14px;color:#000;transform:scaleX(0.8869);">00:00:45</div>
<div class="t" style="left:729.30px;top:319px;font-size:12px;line-height:14px;color:#000;transform:scaleX(0.8869);">00:00:50</div>
<div class="bar" style="left:91px;top:334px;width:681px;background:#0070ff"><div class="bt" style="left:1.50px;top:8px;font-size:12px;line-height:14px;color:#ffffe8;transform:scaleX(0.8661);">Fiber-Bundles.mov</div></div>
<div class="bar" style="left:91px;top:366px;width:130px;background:#ee2200"><div class="bt" style="left:1.50px;top:8px;font-size:12px;line-height:14px;color:#ffffe8;transform:scaleX(0.8894);">switchblade_group.jpg</div></div>
<div class="bar" style="left:223px;top:366px;width:130px;background:#ee2200"><div class="bt" style="left:1.50px;top:8px;font-size:12px;line-height:14px;color:#ffffe8;transform:scaleX(0.8833);">Stack_Front.jpg</div></div>
<div class="bar" style="left:355px;top:366px;width:130px;background:#ee2200"></div>
<div class="a" style="left:355px;top:366px;width:131px;height:29px;overflow:hidden"><div class="bt" style="left:1.50px;top:8px;font-size:12px;line-height:14px;color:#ffffe8;transform:scaleX(0.8886);">switchblade_head_front.jpg</div></div>
<div class="a" style="left:354px;top:365px;width:133px;height:31px;border:3px solid #1f1f30;border-radius:6px"></div>
<div class="bar" style="left:91px;top:398px;width:130px;background:#33cc33"><div class="bt" style="left:1.50px;top:8px;font-size:12px;line-height:14px;color:#ffffe8;transform:scaleX(0.8925);">helicopter.swf</div></div>
<div class="bar" style="left:223px;top:398px;width:130px;background:#33cc33"><div class="bt" style="left:1.50px;top:8px;font-size:12px;line-height:14px;color:#ffffe8;transform:scaleX(0.8847);">boat.swf</div></div>
<div class="bar" style="left:355px;top:398px;width:130px;background:#33cc33"><div class="bt" style="left:1.50px;top:8px;font-size:12px;line-height:14px;color:#ffffe8;transform:scaleX(0.8976);">car.swf</div></div>
<div class="bar" style="left:487px;top:398px;width:130px;background:#33cc33"><div class="bt" style="left:1.50px;top:8px;font-size:12px;line-height:14px;color:#ffffe8;transform:scaleX(0.8721);">flowers.swf</div></div>
<div class="bar" style="left:91px;top:430px;width:681px;background:#bf00ff"><div class="bt" style="left:1.50px;top:8px;font-size:12px;line-height:14px;color:#ffffe8;transform:scaleX(0.8891);">CARVIN-CT6-GW.wmv</div></div>
<div class="bar" style="left:91px;top:462px;width:681px;background:#ff8000"><div class="bt" style="left:1.50px;top:8px;font-size:12px;line-height:14px;color:#ffffe8;transform:scaleX(0.8840);">Experience.mpg</div></div>
<div class="bar" style="left:91px;top:494px;width:50px;background:#00c0c0"><div class="bt" style="left:1.50px;top:8px;font-size:12px;line-height:14px;color:#ffffe8;transform:scaleX(0.8886);">sample_mpeg4.mp4</div></div>
<div class="bar" style="left:91px;top:526px;width:526px;background:#c0007f"><div class="bt" style="left:1.50px;top:8px;font-size:12px;line-height:14px;color:#ffffe8;transform:scaleX(0.8843);">MPEG.mpeg</div></div>
<div class="bar" style="left:91px;top:558px;width:681px;background:#99b9e6"><div class="bt" style="left:1.50px;top:8px;font-size:12px;line-height:14px;color:#ffffe8;transform:scaleX(0.9102);">t_cod4a_h264.wmv</div></div>
<div class="bar" style="left:91px;top:590px;width:526px;background:#ff7f50"><div class="bt" style="left:1.50px;top:8px;font-size:12px;line-height:14px;color:#ffffe8;transform:scaleX(0.9145);">www.telegraph.co.uk</div></div>
<div class="bar" style="left:91px;top:622px;width:592px;background:#ccc000"><div class="bt" style="left:1.50px;top:8px;font-size:12px;line-height:14px;color:#ffffe8;transform:scaleX(0.8933);">news.yahoo.com</div></div>
<div class="t" style="left:32.30px;top:342px;font-size:12px;line-height:14px;color:#000;transform:scaleX(0.8401);">Player 1</div>
<div class="t" style="left:32.30px;top:374px;font-size:12px;line-height:14px;color:#000;transform:scaleX(0.8401);">Player 2</div>
<div class="t" style="left:32.30px;top:406px;font-size:12px;line-height:14px;color:#000;transform:scaleX(0.8401);">Player 3</div>
<div class="t" style="left:32.30px;top:438px;font-size:12px;line-height:14px;color:#000;transform:scaleX(0.8401);">Player 4</div>
<div class="t" style="left:32.30px;top:470px;font-size:12px;line-height:14px;color:#000;transform:scaleX(0.8401);">Player 5</div>
<div class="t" style="left:32.30px;top:502px;font-size:12px;line-height:14px;color:#000;transform:scaleX(0.8401);">Player 6</div>
<div class="t" style="left:32.30px;top:534px;font-size:12px;line-height:14px;color:#000;transform:scaleX(0.8401);">Player 7</div>
<div class="t" style="left:32.30px;top:566px;font-size:12px;line-height:14px;color:#000;transform:scaleX(0.8401);">Player 8</div>
<div class="t" style="left:32.30px;top:598px;font-size:12px;line-height:14px;color:#000;transform:scaleX(0.8401);">Player 9</div>
<div class="t" style="left:32.30px;top:630px;font-size:12px;line-height:14px;color:#000;transform:scaleX(0.8531);">Player 10</div>
<div class="a" style="left:772px;top:319px;width:17px;height:334px;background:linear-gradient(90deg,#e6e6e6,#f2f2f2 30%,#f0f0f0)"></div>
<div class="thumb" style="left:774px;top:337px;width:14px;height:15px;background:linear-gradient(90deg,#f6f6f6 0,#eaeaec 45%,#d8d8da 55%,#c4c4c6 100%)"></div>
<svg class="a" style="left:777px;top:325px" width="9" height="6"><path d="M0.8 5 L4.5 0.9 L8.2 5 Z" fill="#444"/></svg>
<svg class="a" style="left:777px;top:642px" width="9" height="6"><path d="M0.8 1 L4.5 5.1 L8.2 1 Z" fill="#444"/></svg>
<div class="a" style="left:772px;top:653px;width:17px;height:17px;background:#f0f0f0"></div>
<div class="a" style="left:24px;top:653px;width:748px;height:17px;background:linear-gradient(#e6e6e6,#f1f1f1 25%,#f0f0f0)"></div>
<div class="thumb" style="left:42px;top:654px;width:25px;height:15px;background:linear-gradient(#f6f6f6 0,#eaeaec 45%,#d8d8da 55%,#c4c4c6 100%)"></div>
<div class="a" style="left:50px;top:657px;width:1px;height:8px;background:#505050"></div><div class="a" style="left:51px;top:657px;width:1px;height:8px;background:#fafafa"></div>
<div class="a" style="left:53px;top:657px;width:1px;height:8px;background:#505050"></div><div class="a" style="left:54px;top:657px;width:1px;height:8px;background:#fafafa"></div>
<div class="a" style="left:56px;top:657px;width:1px;height:8px;background:#505050"></div><div class="a" style="left:57px;top:657px;width:1px;height:8px;background:#fafafa"></div>
<svg class="a" style="left:29px;top:657px" width="6" height="9"><path d="M5 0.8 L0.8 4.5 L5 8.2 Z" fill="#444"/></svg>
<svg class="a" style="left:761px;top:657px" width="6" height="9"><path d="M1 0.8 L5.2 4.5 L1 8.2 Z" fill="#444"/></svg>
<div class="t" style="left:16.10px;top:692px;font-size:12px;line-height:14px;color:#000;transform:scaleX(0.8666);">Timeline Scale</div>
<div class="btn" style="left:92px;top:689px;width:113px;height:21px"></div>
<div class="t" style="left:96.30px;top:693px;font-size:12px;line-height:14px;color:#000;transform:scaleX(0.8827);">5 Seconds</div>
<svg class="a" style="left:192px;top:697px" width="9" height="6"><path d="M0 0.5 L9 0.5 L4.5 5.5 Z" fill="#000"/></svg>
<div class="t" style="left:218.30px;top:693px;font-size:12px;line-height:14px;color:#000;transform:scaleX(0.8754);">Project Name:</div>
<div class="btn" style="left:587px;top:685px;width:58px;height:24px"></div>
<div class="t" style="left:595.30px;top:690px;font-size:12px;line-height:14px;color:#000;transform:scaleX(0.9049);">Locate 0</div>
<div class="btn" style="left:662px;top:685px;width:58px;height:24px"></div>
<div class="t" style="left:681.50px;top:690px;font-size:12px;line-height:14px;color:#000;transform:scaleX(0.8162);">Play</div>
<div class="a" style="left:681.5px;top:702px;width:6.5px;height:1px;background:#000"></div>
<div class="btn" style="left:737px;top:685px;width:58px;height:24px"></div>
<div class="t" style="left:755.50px;top:690px;font-size:12px;line-height:14px;color:#000;transform:scaleX(0.8374);">Stop</div>
<div class="a" style="left:755.5px;top:702px;width:6.7px;height:1px;background:#000"></div>
<div class="a" style="left:133px;top:598px;font-weight:bold;font-size:52px;line-height:58px;color:#000;-webkit-text-stroke:2.6px #000;opacity:.1;white-space:nowrap;transform-origin:0 0;transform:scaleX(1.094)">SoftwareSuggest</div>
<div class="a" style="left:603.5px;top:616px;font-weight:bold;font-size:32px;line-height:36px;color:#000;-webkit-text-stroke:1.6px #000;opacity:.1;white-space:nowrap;transform-origin:0 0;transform:scaleX(0.985)">.com</div>

</body></html>
